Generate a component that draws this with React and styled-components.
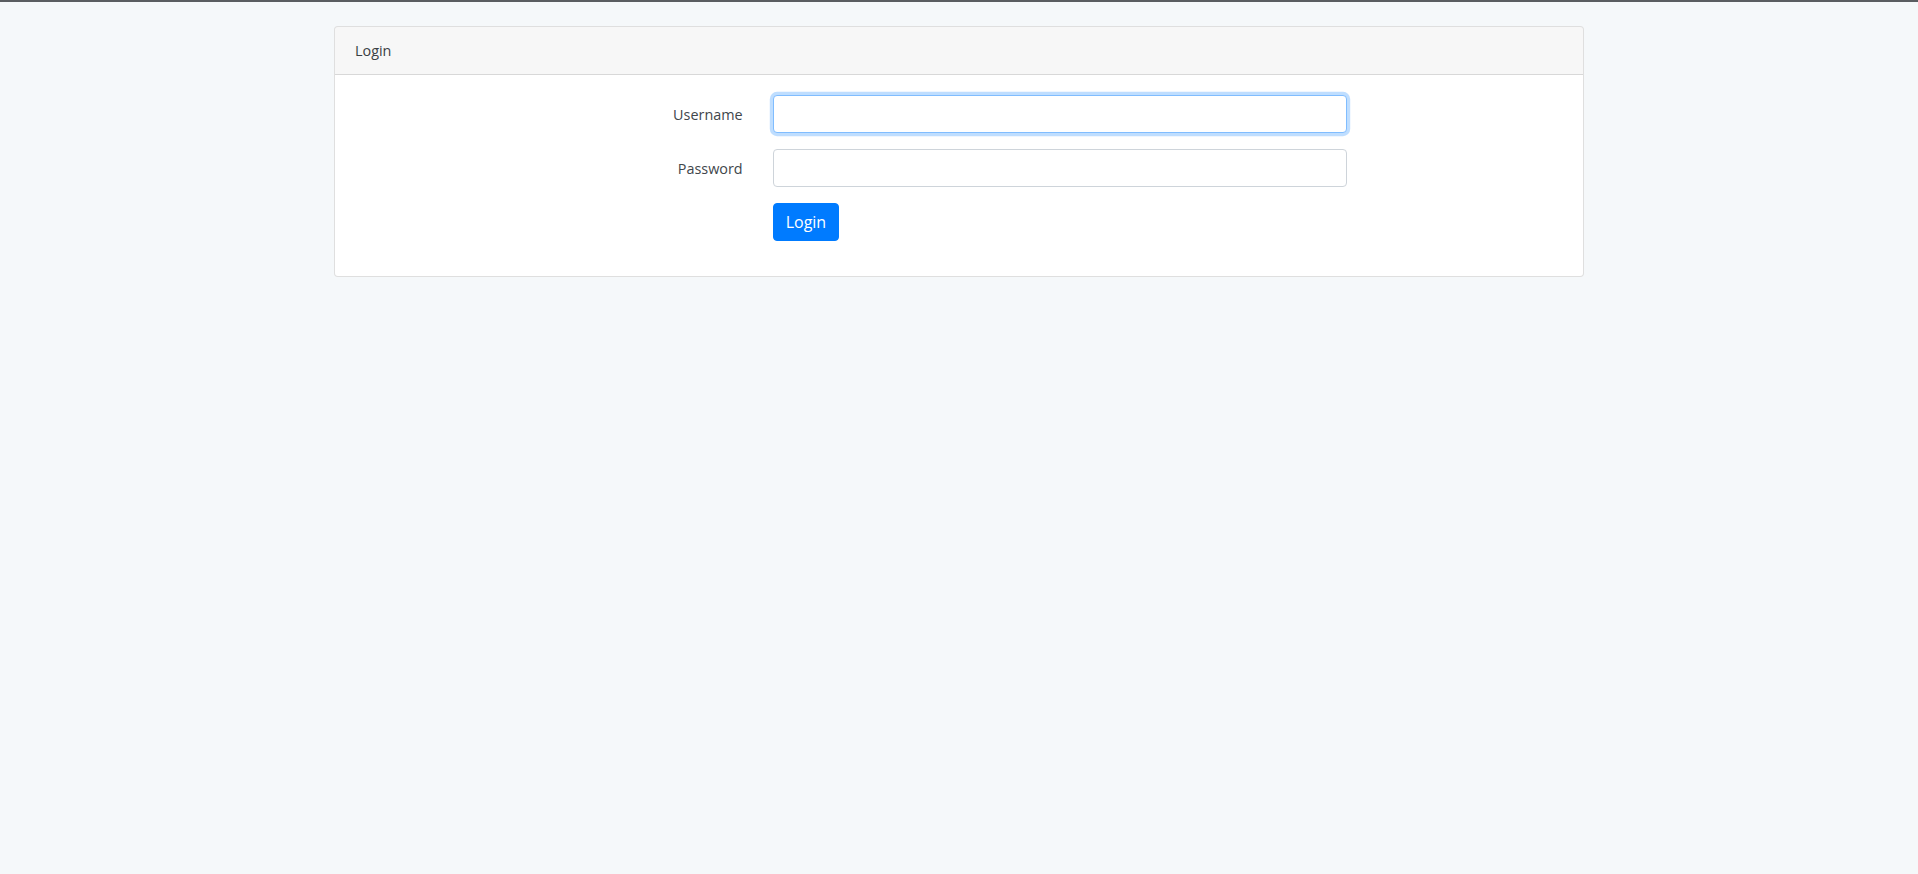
import React from "react"
import styled, { createGlobalStyle } from "styled-components"

const GlobalStyle = createGlobalStyle`
  html, body {
    margin: 0;
    padding: 0;
  }
  body {
    background: #f5f8fa;
    border-top: 2px solid #5a5d61;
    font-family: "Open Sans", "Liberation Sans", sans-serif;
    font-size: 14.4px;
    line-height: 1.6;
    color: #3a3f44;
    min-height: 872px;
  }
  * {
    box-sizing: border-box;
  }
`

const Main = styled.main`
  padding: 24px 0;
`

const Container = styled.div`
  max-width: 1280px;
  margin: 0 auto;
  padding: 0 15px;
`

const Card = styled.div`
  background: #fff;
  border: 1px solid rgba(0, 0, 0, 0.125);
  border-radius: 4px;
`

const CardHeader = styled.div`
  padding: 12px 20px;
  background: rgba(0, 0, 0, 0.03);
  border-bottom: 1px solid rgba(0, 0, 0, 0.125);
  border-radius: 3px 3px 0 0;
`

const CardBody = styled.div`
  padding: 20px 20px 19px;
`

const Form = styled.form`
  display: flex;
  flex-direction: column;
  gap: 16px;
  padding-bottom: 16px;
`

const Row = styled.div`
  display: grid;
  grid-template-columns: 4fr 6fr 2fr;
  align-items: center;
`

const Label = styled.label`
  text-align: right;
  padding: 0 15px;
  color: #41464b;
`

const Field = styled.div`
  padding: 0 15px;
  grid-column: 2;
`

const Input = styled.input`
  display: block;
  width: 100%;
  height: 38px;
  padding: 6px 12px;
  font-family: inherit;
  font-size: 16px;
  line-height: 1.5;
  color: #495057;
  background: #fff;
  border: 1px solid #ced4da;
  border-radius: 4px;
  outline: none;

  &:focus {
    border-color: #80bdff;
    box-shadow: 0 0 0 3.2px rgba(0, 123, 255, 0.25);
  }
`

const Button = styled.button`
  display: inline-block;
  padding: 6px 12px;
  font-family: inherit;
  font-size: 16px;
  line-height: 1.5;
  color: #fff;
  background: #007bff;
  border: 1px solid #007bff;
  border-radius: 4px;
  cursor: pointer;
`

export default function App() {
  return (
    <>
      <GlobalStyle />
      <Main>
        <Container>
          <Card>
            <CardHeader>Login</CardHeader>
            <CardBody>
              <Form onSubmit={e => e.preventDefault()}>
                <Row>
                  <Label htmlFor="username">Username</Label>
                  <Field>
                    <Input id="username" type="text" autoFocus />
                  </Field>
                </Row>
                <Row>
                  <Label htmlFor="password">Password</Label>
                  <Field>
                    <Input id="password" type="password" />
                  </Field>
                </Row>
                <Row>
                  <Field>
                    <Button type="submit">Login</Button>
                  </Field>
                </Row>
              </Form>
            </CardBody>
          </Card>
        </Container>
      </Main>
    </>
  )
}
